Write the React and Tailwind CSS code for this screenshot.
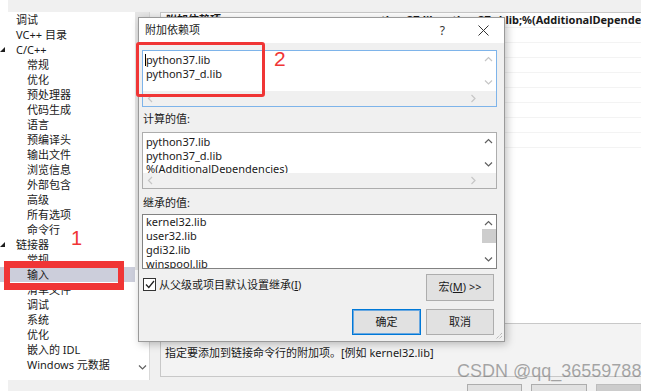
import React from 'react';

const TREE = [
  { t: '调试', l: 0 },
  { t: 'VC++ 目录', l: 0 },
  { t: 'C/C++', l: 0, open: true },
  { t: '常规', l: 1 },
  { t: '优化', l: 1 },
  { t: '预处理器', l: 1 },
  { t: '代码生成', l: 1 },
  { t: '语言', l: 1 },
  { t: '预编译头', l: 1 },
  { t: '输出文件', l: 1 },
  { t: '浏览信息', l: 1 },
  { t: '外部包含', l: 1 },
  { t: '高级', l: 1 },
  { t: '所有选项', l: 1 },
  { t: '命令行', l: 1 },
  { t: '链接器', l: 0, open: true },
  { t: '常规', l: 1 },
  { t: '输入', l: 1, sel: true },
  { t: '清单文件', l: 1 },
  { t: '调试', l: 1 },
  { t: '系统', l: 1 },
  { t: '优化', l: 1 },
  { t: '嵌入的 IDL', l: 1 },
  { t: 'Windows 元数据', l: 1 },
];

const PROPS = [
  { n: '附加依赖项', v: 'python37.lib;python37_d.lib;%(AdditionalDependencies)', bold: true },
  { n: '忽略所有默认库', v: '' },
  { n: '忽略特定默认库', v: '' },
  { n: '模块定义文件', v: '' },
  { n: '将模块添加到程序集', v: '' },
  { n: '嵌入托管资源文件', v: '' },
  { n: '强制符号引用', v: '' },
  { n: '延迟加载的 DLL', v: '' },
  { n: '程序集链接资源', v: '' },
];

function Chevron({ dir, color }) {
  const vertical = dir === 'up' || dir === 'down';
  const d = {
    up: 'M1 5 L4.5 1.5 L8 5',
    down: 'M1 1.5 L4.5 5 L8 1.5',
    left: 'M5 1 L1.5 4.5 L5 8',
    right: 'M1.5 1 L5 4.5 L1.5 8',
  }[dir];
  return (
    <svg width={vertical ? 9 : 7} height={vertical ? 7 : 9} viewBox={vertical ? '0 0 9 7' : '0 0 7 9'}>
      <path d={d} fill="none" stroke={color} strokeWidth="1.2" />
    </svg>
  );
}

function ListBox({ lines, border, h, vColor, hColor, thumb, hbar, leading, pt }) {
  return (
    <div className={`w-[355px] border ${border} flex flex-col bg-white`} style={{ height: h }}>
      <div className="flex flex-1 min-h-0">
        <div className="flex-1 overflow-hidden pl-[3px] whitespace-nowrap text-[#1a1a1a]" style={{ paddingTop: pt, lineHeight: leading }}>
          {lines.map((l, i) => (
            <div key={i} className="relative">
              {i === 0 && hbar === 'caret' && <span className="absolute left-[-1px] top-[1px] w-px h-[12px] bg-black" />}
              {l}
            </div>
          ))}
        </div>
        <div className="w-[15px] flex flex-col items-center justify-between py-[5px] bg-white">
          <Chevron dir="up" color={vColor} />
          {thumb && <div className="w-[14px] h-[14px] bg-[#cdcdcd] mb-auto ml-[1px] mt-[2px]" />}
          <Chevron dir="down" color={vColor} />
        </div>
      </div>
      {hbar && (
        <div className="h-[15px] flex">
          <div className="flex-1 flex items-center justify-between px-[4px] bg-[#f0f0f0]">
            <Chevron dir="left" color={hColor} />
            <Chevron dir="right" color={hColor} />
          </div>
          <div className="w-[15px] bg-[#f0f0f0]" />
        </div>
      )}
    </div>
  );
}

function Dialog() {
  return (
    <div className="absolute left-[138px] top-[17px] w-[367px] h-[325px] border border-[#9a9a9a] bg-[#f0f0f0] shadow-[2px_2px_8px_rgba(0,0,0,0.25)] flex flex-col text-[11px]">
      <div className="h-[25px] bg-white flex items-center pl-[6px] shrink-0">
        <span className="text-[#1a1a1a]">附加依赖项</span>
        <span className="ml-auto mr-[33px] text-[12px] text-[#333]">?</span>
        <svg width="11" height="11" viewBox="0 0 11 11" className="mr-[15px]">
          <path d="M0.5 0.5 L10.5 10.5 M10.5 0.5 L0.5 10.5" stroke="#333" strokeWidth="1" />
        </svg>
      </div>
      <div className="flex flex-col pl-[3px] pr-[7px]">
        <div className="mt-[7px]">
          <ListBox
            lines={['python37.lib', 'python37_d.lib']}
            border="border-[#7eb4ea]"
            h={57}
            vColor="#c6c6c6"
            hColor="#c6c6c6"
            hbar="caret"
            leading="13.5px"
            pt={2}
          />
        </div>
        <div className="mt-[5px] h-[14px] leading-[14px] pl-[1px] text-[#1a1a1a]">计算的值:</div>
        <div className="mt-[6px]">
          <ListBox
            lines={['python37.lib', 'python37_d.lib', '%(AdditionalDependencies)']}
            border="border-[#adadad]"
            h={57}
            vColor="#606060"
            hColor="#c6c6c6"
            hbar
            leading="13.5px"
            pt={2}
          />
        </div>
        <div className="mt-[7px] h-[14px] leading-[14px] pl-[1px] text-[#1a1a1a]">继承的值:</div>
        <div className="mt-[4px]">
          <ListBox
            lines={['kernel32.lib', 'user32.lib', 'gdi32.lib', 'winspool.lib']}
            border="border-[#828282]"
            h={55}
            vColor="#606060"
            thumb
            leading="14px"
            pt={0}
          />
        </div>
        <div className="mt-[5px] flex items-start pr-[3px]">
          <div className="mt-[4px] ml-[1px] w-[13px] h-[13px] border border-[#333] bg-white flex items-center justify-center">
            <svg width="10" height="9" viewBox="0 0 10 9">
              <path d="M1 4.5 L3.8 7.5 L9 1" fill="none" stroke="#222" strokeWidth="1.3" />
            </svg>
          </div>
          <span className="ml-[3px] mt-[4px] leading-[14px] text-[#1a1a1a]">
            从父级或项目默认设置继承(<span className="underline">I</span>)
          </span>
          <div className="ml-auto w-[68px] h-[27px] bg-[#e1e1e1] border border-[#adadad] flex items-center justify-center text-[#1a1a1a]">
            宏(<span className="underline">M</span>)&nbsp;&gt;&gt;
          </div>
        </div>
        <div className="mt-[8px] flex justify-end gap-[5px] pr-[3px]">
          <div className="w-[69px] h-[26px] bg-[#e1e1e1] border border-[#0078d7] shadow-[inset_0_0_0_1px_#6aa8e0] flex items-center justify-center text-[#1a1a1a]">确定</div>
          <div className="w-[68px] h-[26px] bg-[#e1e1e1] border border-[#adadad] flex items-center justify-center text-[#1a1a1a]">取消</div>
        </div>
      </div>
      <svg width="9" height="9" viewBox="0 0 9 9" className="absolute right-[1px] bottom-[1px]">
        <path d="M8 2 L2 8 M8 5 L5 8" stroke="#a0a0a0" strokeWidth="1" strokeDasharray="1 1" />
      </svg>
    </div>
  );
}

export default function App() {
  return (
    <div className="relative w-[662px] h-[391px] bg-white overflow-hidden font-['Noto_Sans','Noto_Sans_CJK_SC',sans-serif] text-[11px] text-[#1a1a1a]">
      <div className="ml-[8px] w-[633px] h-[391px] bg-[#f0f0f0] flex flex-col">
        <div className="pt-[12px] flex items-start">
          {/* tree */}
          <div className="-ml-[8px] w-[150px] h-[368px] bg-white flex border-r border-[#d9d9d9]">
            <div className="flex-1 flex flex-col">
              {TREE.map((it, i) => (
                <div
                  key={i}
                  className={`h-[15px] leading-[15px] flex items-center whitespace-nowrap ${it.sel ? 'bg-[#cccedb]' : ''}`}
                >
                  <div className="w-[16px] shrink-0 flex items-center">
                    {it.open && (
                      <svg width="5" height="5" viewBox="0 0 5 5">
                        <path d="M5 0 L5 5 L0 5 Z" fill="#1e1e1e" />
                      </svg>
                    )}
                  </div>
                  <span className={it.l === 1 ? 'ml-[11px]' : ''}>{it.t}</span>
                </div>
              ))}
            </div>
            <div className="w-[14px] flex flex-col items-center bg-white">
              <div className="w-[14px] h-[258px] bg-[#e6e6e6]" />
              <div className="mt-auto mb-[9px]">
                <Chevron dir="down" color="#606060" />
              </div>
            </div>
          </div>
          {/* right side */}
          <div className="ml-[10px] w-[481px] flex flex-col">
            <div className="h-[311px] bg-white border-t border-l border-[#c8c8c8] flex flex-col">
              {PROPS.map((p, i) => (
                <div key={i} className="h-[15px] flex border-b border-[#f3f3f3] whitespace-nowrap leading-[14px] overflow-hidden">
                  <div className={`w-[204px] shrink-0 pl-[5px] ${p.bold ? 'font-bold' : ''}`}>{p.n}</div>
                  <div className={`flex-1 pl-[3px] ${p.bold ? 'font-bold' : ''}`}>{p.v}</div>
                </div>
              ))}
            </div>
            <div className="h-[54px] border border-r-0 border-[#c8c8c8] bg-[#f3f3f3] pl-[4px] pt-[2px] leading-[14px]">
              <div className="font-bold">附加依赖项</div>
              <div className="mt-[6px]">指定要添加到链接命令行的附加项。[例如 kernel32.lib]</div>
            </div>
          </div>
        </div>
        <div className="mt-[4px] flex justify-end gap-[9px]">
          <div className="w-[55px] h-[20px] bg-[#e1e1e1] border border-[#adadad]" />
          <div className="w-[56px] h-[20px] bg-[#e1e1e1] border border-[#adadad]" />
          <div className="w-[45px] h-[20px] bg-[#cccccc] border border-[#bdbdbd]" />
        </div>
      </div>

      <Dialog />

      {/* annotations */}
      <div className="absolute left-[4px] top-[261px] w-[120px] h-[29px] border-x-[6px] border-y-[7px] border-[#f03535]" />
      <div className="absolute left-[71px] top-[226px] text-[20px] leading-[24px] text-[#f03535] font-['Liberation_Sans',sans-serif]">1</div>
      <div className="absolute left-[136px] top-[42px] w-[129px] h-[55px] border-[3px] border-[#f03535] rounded-[3px]" />
      <div className="absolute left-[274px] top-[46px] text-[21px] leading-[25px] text-[#f03535] font-['Liberation_Sans',sans-serif]">2</div>

      <div className="absolute left-[457px] top-[360px] text-[18px] leading-[22px] text-[rgba(110,110,110,0.6)] font-['Liberation_Sans',sans-serif] whitespace-nowrap">
        CSDN @qq_36559788
      </div>
    </div>
  );
}
